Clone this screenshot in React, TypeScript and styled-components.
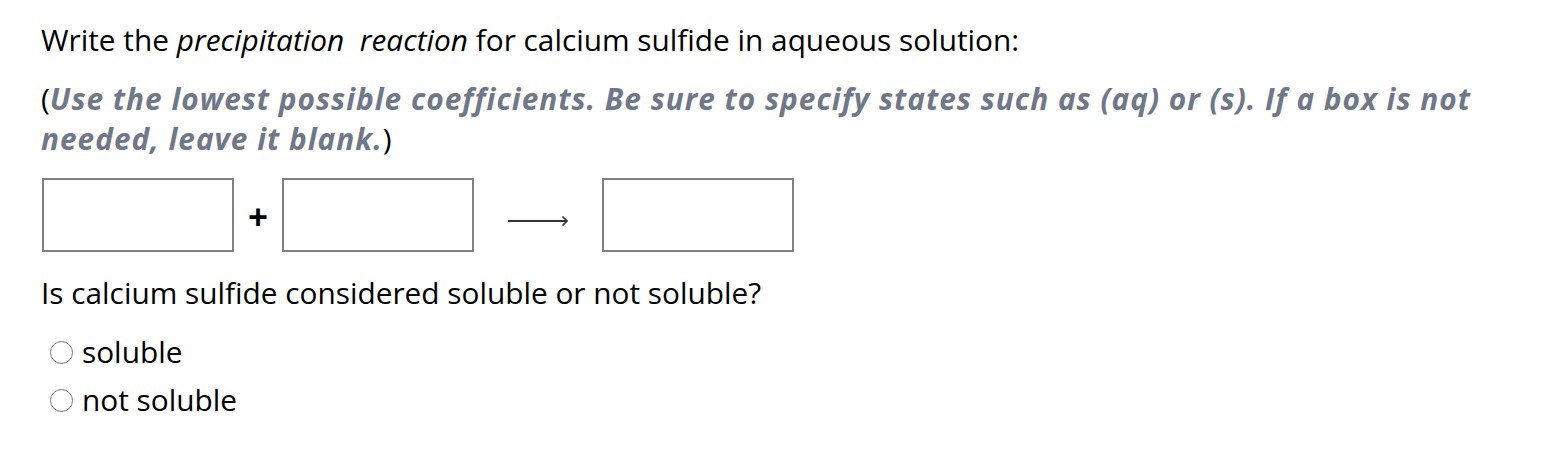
import React from "react";
import styled, { createGlobalStyle } from "styled-components";

const Global = createGlobalStyle`
  html, body { margin: 0; padding: 0; background: #fff; }
  body { font-family: "Open Sans", "Liberation Sans", sans-serif; color: #000; }
`;

const Page = styled.div`
  padding: 20px 0 0 41px;
  width: 1480px;
`;

const Title = styled.p`
  margin: 0;
  font-size: 29.8px;
  line-height: 40px;
`;

const Note = styled.p`
  margin: 19px 0 0 0;
  font-size: 29.8px;
  line-height: 40px;
  width: 1450px;
`;

const Hint = styled.em`
  font-weight: 700;
  color: #6f7788;
  letter-spacing: 1px;
`;

const Equation = styled.div`
  display: flex;
  align-items: center;
  margin: 19px 0 0 1px;
`;

const Box = styled.div`
  width: 188px;
  height: 70px;
  border: 2px solid #808080;
  background: #fff;
`;

const Plus = styled.span`
  width: 48px;
  text-align: center;
  font-family: "Open Sans", "Liberation Sans", sans-serif;
  font-weight: 700;
  font-size: 35px;
  line-height: 1;
  padding-top: 2px;
`;

const ArrowWrap = styled.span`
  display: flex;
  align-items: center;
  padding: 12px 34px 0 34px;
`;

const Question = styled.p`
  margin: 21px 0 0 0;
  font-size: 29.8px;
  line-height: 40px;
`;

const Options = styled.div`
  display: flex;
  flex-direction: column;
  margin-top: 15px;
`;

const Option = styled.label`
  display: flex;
  align-items: center;
  gap: 9px;
  font-size: 29.8px;
  line-height: 48px;
  margin-left: 9px;
`;

const Radio = styled.span`
  width: 23px;
  height: 23px;
  box-sizing: border-box;
  border-radius: 50%;
  border: 1.5px solid #7a7a7a;
  background: #fff;
`;

const Arrow = () => (
  <svg width="60" height="12" viewBox="0 0 60 12">
    <line x1="0" y1="6" x2="59" y2="6" stroke="#333" strokeWidth="2" />
    <path d="M54.5 1.5 L59 6 L54.5 10.5" fill="none" stroke="#333" strokeWidth="1.6" />
  </svg>
);

export default function App() {
  return (
    <>
      <Global />
      <Page>
        <Title>
          Write the <em>precipitation</em>&nbsp; <em>reaction</em> for calcium sulfide in aqueous solution:
        </Title>
        <Note>
          (<Hint>Use the lowest possible coefficients. Be sure to specify states such as (aq) or (s). If a box is not needed, leave it blank.</Hint>)
        </Note>
        <Equation>
          <Box />
          <Plus>+</Plus>
          <Box />
          <ArrowWrap>
            <Arrow />
          </ArrowWrap>
          <Box />
        </Equation>
        <Question>Is calcium sulfide considered soluble or not soluble?</Question>
        <Options>
          <Option>
            <Radio />
            soluble
          </Option>
          <Option>
            <Radio />
            not soluble
          </Option>
        </Options>
      </Page>
    </>
  );
}
